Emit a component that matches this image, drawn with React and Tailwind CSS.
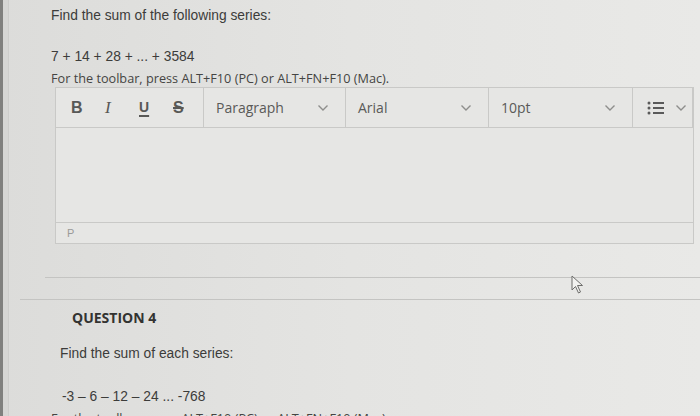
import React from "react";

const Chevron = ({ className = "" }) => (
  <svg width="12" height="8" viewBox="0 0 12 8" className={className}>
    <path d="M1.5 1.5 L6 6 L10.5 1.5" fill="none" stroke="#8e8e8c" strokeWidth="1.4" />
  </svg>
);

const ListIcon = () => (
  <svg width="18" height="16" viewBox="0 0 18 16">
    <circle cx="2" cy="3" r="1.5" fill="#5a5a5a" />
    <circle cx="2" cy="8" r="1.5" fill="#5a5a5a" />
    <circle cx="2" cy="13" r="1.5" fill="#5a5a5a" />
    <rect x="6" y="2" width="11" height="2" fill="#5a5a5a" />
    <rect x="6" y="7" width="11" height="2" fill="#5a5a5a" />
    <rect x="6" y="12" width="11" height="2" fill="#5a5a5a" />
  </svg>
);

const Cursor = () => (
  <svg width="14" height="20" viewBox="0 0 14 20" className="absolute left-[571px] top-[275px]">
    <path d="M1 1 L1 15 L4.5 11.5 L7.5 18 L9.5 17 L6.5 10.5 L11.5 10.5 Z" fill="#f2f2f0" stroke="#6d6d6b" strokeWidth="1" />
  </svg>
);

const SelectCell = ({ label, width }) => (
  <div className={`flex items-center justify-between border-r border-[#c9c9c7] pl-[12px] pr-[16px] ${width}`}>
    <span className="text-[14px] text-[#5a5a58] [font-family:'Open_Sans',sans-serif]">{label}</span>
    <Chevron />
  </div>
);

export default function App() {
  return (
    <div className="relative flex h-[416px] w-[700px] overflow-hidden bg-gradient-to-r from-[#dcdcda] via-[#e4e4e2] to-[#e9e9e7] text-[#3c3c3a] [font-family:'Liberation_Sans',Arial,sans-serif]">
      <div className="w-[3px] bg-[#80807e]" />
      <div className="w-[6px] border-r border-[#cdcdcb] bg-[#d6d6d4]" />

      <div className="flex flex-1 flex-col">
        <p className="ml-[42px] mt-[8px] text-[13.8px] leading-[16px]">Find the sum of the following series:</p>
        <p className="ml-[42px] mt-[25px] text-[13.8px] leading-[16px]">7 + 14 + 28 + ... + 3584</p>
        <p className="ml-[42px] mt-[6px] text-[12.7px] leading-[15px] text-[#454543] [font-family:'Open_Sans',sans-serif]">
          For the toolbar, press ALT+F10 (PC) or ALT+FN+F10 (Mac).
        </p>

        <div className="ml-[46px] mt-[1px] w-[639px] border border-[#c9c9c7] bg-[#e6e6e4]">
          <div className="flex h-[40px] border-b border-[#c9c9c7]">
            <div className="flex w-[148px] items-center gap-[20px] border-r border-[#c9c9c7] pl-[15px] text-[#585856]">
              <span className="w-[14px] text-[16px] font-bold">B</span>
              <span className="w-[14px] text-[17px] italic [font-family:'Liberation_Serif',serif]">I</span>
              <span className="w-[14px] text-[14px] font-bold underline decoration-[1.5px] underline-offset-[3px]">U</span>
              <span className="w-[14px] text-[16px] font-bold line-through decoration-[1.5px]">S</span>
            </div>
            <SelectCell label="Paragraph" width="w-[142px]" />
            <SelectCell label="Arial" width="w-[143px]" />
            <SelectCell label="10pt" width="w-[144px]" />
            <div className="flex flex-1 items-center gap-[10px] border-r border-[#c9c9c7] pl-[14px]">
              <ListIcon />
              <Chevron />
            </div>
          </div>
          <div className="h-[94px]" />
          <div className="flex h-[21px] items-center border-t border-[#c9c9c7] pl-[11px] text-[11px] text-[#9a9a98]">
            P
          </div>
        </div>

        <div className="ml-[36px] mt-[33px] border-t border-[#c4c4c2]" />
        <div className="ml-[11px] mt-[21px] border-t border-[#c4c4c2]" />

        <p className="ml-[63px] mt-[9px] text-[14px] font-bold leading-[18px] text-[#333331] [font-family:'Open_Sans',sans-serif]">
          QUESTION 4
        </p>
        <p className="ml-[51px] mt-[19px] text-[13.8px] leading-[16px]">Find the sum of each series:</p>
        <p className="ml-[53px] mt-[27px] text-[13.8px] leading-[16px]">-3 – 6 – 12 – 24 ... -768</p>
        <p className="ml-[42px] mt-[6px] text-[12.7px] leading-[15px] text-[#454543] [font-family:'Open_Sans',sans-serif]">
          For the toolbar, press ALT+F10 (PC) or ALT+FN+F10 (Mac).
        </p>
      </div>

      <Cursor />
    </div>
  );
}
